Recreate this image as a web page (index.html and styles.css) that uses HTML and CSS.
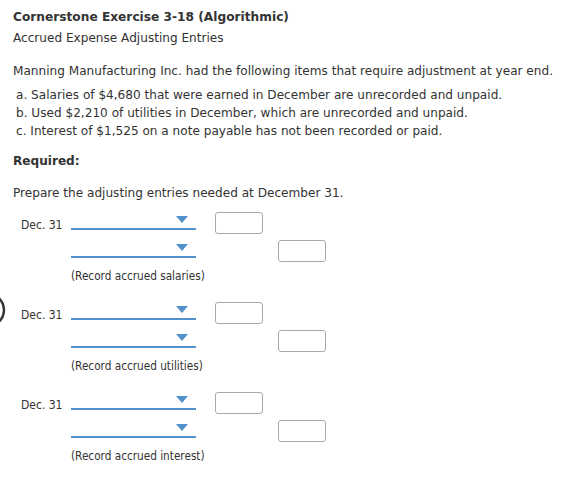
FILE: index.html
```html
<!DOCTYPE html>
<html lang="en">
<head>
<meta charset="UTF-8">
<title>Cornerstone Exercise 3-18 (Algorithmic)</title>
<link rel="stylesheet" href="styles.css">
</head>
<body>
	<!-- partly hidden round button at the left edge -->
	<svg class="edgeIcon" width="8" height="36" viewBox="0 0 8 36"><circle cx="-12" cy="18" r="16" fill="none" stroke="#333" stroke-width="2.4"/></svg>

	<h1 class="title">Cornerstone Exercise 3-18 (Algorithmic)</h1>
	<h2 class="subTitle">Accrued Expense Adjusting Entries</h2>

	<p class="intro">Manning Manufacturing Inc. had the following items that require adjustment at year end.</p>
	<ul class="items">
		<li>a. Salaries of $4,680 that were earned in December are unrecorded and unpaid.</li>
		<li>b. Used $2,210 of utilities in December, which are unrecorded and unpaid.</li>
		<li>c. Interest of $1,525 on a note payable has not been recorded or paid.</li>
	</ul>

	<p class="required">Required:</p>
	<p class="prepare">Prepare the adjusting entries needed at December 31.</p>

	<div class="entry">
		<div class="row">
			<span class="date">Dec. 31</span>
			<span class="select"><i class="arrow"></i></span>
			<span class="box"></span>
		</div>
		<div class="row">
			<span class="date"></span>
			<span class="select"><i class="arrow"></i></span>
			<span class="box credit"></span>
		</div>
		<div class="note">(Record accrued salaries)</div>
	</div>

	<div class="entry">
		<div class="row">
			<span class="date">Dec. 31</span>
			<span class="select"><i class="arrow"></i></span>
			<span class="box"></span>
		</div>
		<div class="row">
			<span class="date"></span>
			<span class="select"><i class="arrow"></i></span>
			<span class="box credit"></span>
		</div>
		<div class="note">(Record accrued utilities)</div>
	</div>

	<div class="entry">
		<div class="row">
			<span class="date">Dec. 31</span>
			<span class="select"><i class="arrow"></i></span>
			<span class="box"></span>
		</div>
		<div class="row">
			<span class="date"></span>
			<span class="select"><i class="arrow"></i></span>
			<span class="box credit"></span>
		</div>
		<div class="note">(Record accrued interest)</div>
	</div>
</body>
</html>
```

FILE: styles.css
```css
* { padding: 0; margin: 0; box-sizing: border-box; }
html, body { height: 100%; overflow: hidden; }
body { position: relative; padding: 8px 0 0 13px; background: #fff; color: #333; font-family: "DejaVu Sans", Verdana, sans-serif; font-size: 12.1px; line-height: 18px; }
.edgeIcon { position: absolute; left: 0; top: 292px; }
.title { font-size: 12.2px; font-weight: bold; line-height: 18px; }
.subTitle { margin-top: 3px; font-size: 12.1px; font-weight: normal; line-height: 18px; }
.intro { margin-top: 15px; white-space: nowrap; }
.items { margin-top: 6px; padding-left: 3px; list-style: none; }
.required { margin-top: 12px; font-weight: bold; }
.prepare { margin-top: 14px; }
.entry { margin-top: 10px; }
.entry + .entry { margin-top: 19px; }
.row { display: flex; height: 28px; }
.date { width: 58px; padding: 4px 0 0 8px; font-family: "DejaVu Sans Condensed", Tahoma, sans-serif; font-size: 12px; line-height: 18px; }
.select { display: flex; justify-content: flex-end; align-items: center; width: 125px; height: 18px; padding-right: 8px; border-bottom: 2px solid #5391cb; }
.arrow { width: 0; height: 0; margin-top: -1px; border-left: 6.5px solid transparent; border-right: 6.5px solid transparent; border-top: 7px solid #5391cb; }
.box { width: 48px; height: 22px; margin-left: 19px; border: 1px solid #a9a9a9; border-radius: 3px; }
.box.credit { margin-left: 82px; }
.note { height: 14px; margin-top: 1px; margin-left: 58px; font-family: "DejaVu Sans Condensed", Tahoma, sans-serif; font-size: 11.7px; line-height: 14px; }
```
